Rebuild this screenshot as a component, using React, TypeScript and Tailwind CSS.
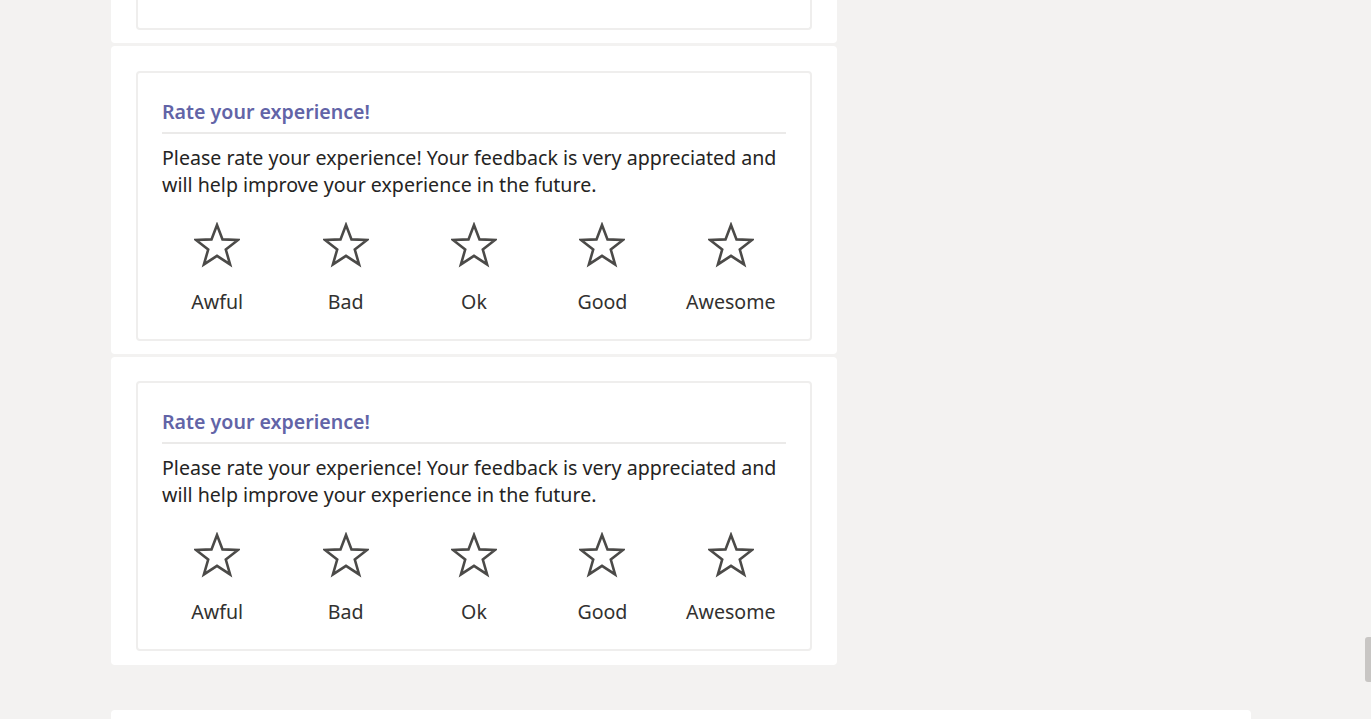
import React from 'react';

const labels = ['Awful', 'Bad', 'Ok', 'Good', 'Awesome'];

const Star = () => (
  <svg width="46" height="46" viewBox="0 0 46 46" className="block">
    <polygon
      points="23,3 28.5,17.4 44,17.9 31.8,27.5 36.1,42.4 23,33.8 9.9,42.4 14.2,27.5 2,17.9 17.5,17.4"
      fill="none"
      stroke="#4b4a48"
      strokeWidth="2.6"
      strokeLinejoin="miter"
    />
  </svg>
);

const RatingCard = () => (
  <div className="border-2 border-[#efeeed] rounded-[4px] px-[24px] pt-[25px] pb-[24px]">
    <div className="text-[19.6px] leading-[28px] font-semibold text-[#6264a7] pb-[6px] border-b-2 border-[#ebeae9]">
      Rate your experience!
    </div>
    <p className="mt-[10px] text-[19.6px] leading-[27px] text-[#252423]">
      Please rate your experience! Your feedback is very appreciated and will help improve your experience in the
      future.
    </p>
    <div className="grid grid-cols-5 w-[642px] -ml-[9px] mt-[24px]">
      {labels.map((l) => (
        <button key={l} className="flex flex-col items-center">
          <Star />
          <span className="mt-[20px] text-[19.6px] leading-[27px] text-[#323130]">{l}</span>
        </button>
      ))}
    </div>
  </div>
);

const App = () => {
  return (
    <div
      className="relative h-[719px] w-full overflow-hidden bg-[#f3f2f1]"
      style={{ fontFamily: '"Segoe UI", "Noto Sans", "Open Sans", sans-serif' }}
    >
      <div className="pl-[111px] flex flex-col gap-[3px]">
        {/* top message, mostly scrolled out of view */}
        <div className="w-[726px] h-[43px] bg-white rounded-b-[4px] px-[25px] overflow-hidden">
          <div className="h-[30px] border-2 border-t-0 border-[#efeeed] rounded-b-[4px]" />
        </div>

        <div className="w-[726px] bg-white rounded-[4px] px-[25px] pt-[25px] pb-[13px]">
          <RatingCard />
        </div>

        <div className="w-[726px] bg-white rounded-[4px] px-[25px] pt-[24px] pb-[14px]">
          <RatingCard />
        </div>

        <div className="w-[1140px] h-[40px] bg-white rounded-t-[4px] mt-[42px]" />
      </div>

      {/* scrollbar thumb */}
      <div className="absolute right-0 top-[637px] w-[6px] h-[45px] rounded-l-[3px] bg-[#c8c6c4]" />
    </div>
  );
};

export default App;
